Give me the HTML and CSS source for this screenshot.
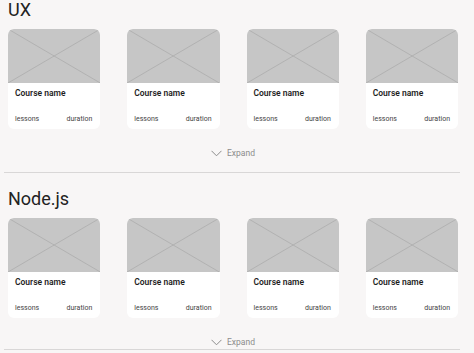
FILE: index.html
```html
<!DOCTYPE html>
<html lang="en">
<head>
    <meta charset="UTF-8">
    <meta name="viewport" content="width=device-width, initial-scale=1.0">
    <title>courses</title>
    <link rel="stylesheet" href="styles.css">
</head>
<body>
    <div class="section">
        <h2>UX</h2>
        <div class="cards">
            <div class="card">
                <div class="thumb"><svg viewBox="0 0 100 60" preserveAspectRatio="none"><path d="M0 0L100 60M100 0L0 60"/></svg></div>
                <div class="card-body">
                    <div class="card-title">Course name</div>
                    <div class="card-meta"><span>lessons</span><span>duration</span></div>
                </div>
            </div>
            <div class="card">
                <div class="thumb"><svg viewBox="0 0 100 60" preserveAspectRatio="none"><path d="M0 0L100 60M100 0L0 60"/></svg></div>
                <div class="card-body">
                    <div class="card-title">Course name</div>
                    <div class="card-meta"><span>lessons</span><span>duration</span></div>
                </div>
            </div>
            <div class="card">
                <div class="thumb"><svg viewBox="0 0 100 60" preserveAspectRatio="none"><path d="M0 0L100 60M100 0L0 60"/></svg></div>
                <div class="card-body">
                    <div class="card-title">Course name</div>
                    <div class="card-meta"><span>lessons</span><span>duration</span></div>
                </div>
            </div>
            <div class="card">
                <div class="thumb"><svg viewBox="0 0 100 60" preserveAspectRatio="none"><path d="M0 0L100 60M100 0L0 60"/></svg></div>
                <div class="card-body">
                    <div class="card-title">Course name</div>
                    <div class="card-meta"><span>lessons</span><span>duration</span></div>
                </div>
            </div>
        </div>
        <div class="expand">
            <svg width="11" height="7" viewBox="0 0 11 7"><path d="M0.5 0.8L5.5 5.8L10.5 0.8"/></svg>
            <span>Expand</span>
        </div>
    </div>

    <div class="section section-last">
        <h2>Node.js</h2>
        <div class="cards">
            <div class="card">
                <div class="thumb"><svg viewBox="0 0 100 60" preserveAspectRatio="none"><path d="M0 0L100 60M100 0L0 60"/></svg></div>
                <div class="card-body">
                    <div class="card-title">Course name</div>
                    <div class="card-meta"><span>lessons</span><span>duration</span></div>
                </div>
            </div>
            <div class="card">
                <div class="thumb"><svg viewBox="0 0 100 60" preserveAspectRatio="none"><path d="M0 0L100 60M100 0L0 60"/></svg></div>
                <div class="card-body">
                    <div class="card-title">Course name</div>
                    <div class="card-meta"><span>lessons</span><span>duration</span></div>
                </div>
            </div>
            <div class="card">
                <div class="thumb"><svg viewBox="0 0 100 60" preserveAspectRatio="none"><path d="M0 0L100 60M100 0L0 60"/></svg></div>
                <div class="card-body">
                    <div class="card-title">Course name</div>
                    <div class="card-meta"><span>lessons</span><span>duration</span></div>
                </div>
            </div>
            <div class="card">
                <div class="thumb"><svg viewBox="0 0 100 60" preserveAspectRatio="none"><path d="M0 0L100 60M100 0L0 60"/></svg></div>
                <div class="card-body">
                    <div class="card-title">Course name</div>
                    <div class="card-meta"><span>lessons</span><span>duration</span></div>
                </div>
            </div>
        </div>
        <div class="expand">
            <svg width="11" height="7" viewBox="0 0 11 7"><path d="M0.5 0.8L5.5 5.8L10.5 0.8"/></svg>
            <span>Expand</span>
        </div>
    </div>
</body>
</html>
```

FILE: styles.css
```css
body {
margin: 0;
background-color: #f8f6f6;
font-family: Roboto, "Liberation Sans", sans-serif;
color: #222;
overflow: hidden;
}


.section {
border-bottom: 1px solid #d9d7d7;
margin: 0 14px 0 4px;
padding: 0 2px 12px 4px;
}


.section-last {
padding-bottom: 0;
}


.section-last h2 {
margin-top: 16px;
}


h2 {
margin: 0 0 9px;
font-size: 18px;
line-height: 20px;
font-weight: 400;
color: #222;
}


.cards {
display: grid;
grid-template-columns: repeat(4, 1fr);
column-gap: 27px;
}


.card {
background: #fff;
border-radius: 6px;
overflow: hidden;
height: 100px;
display: flex;
flex-direction: column;
}


.thumb {
height: 54px;
background: #c6c6c6;
}


.thumb svg {
display: block;
width: 100%;
height: 100%;
}


.thumb path {
stroke: #acacac;
stroke-width: 0.8;
vector-effect: non-scaling-stroke;
fill: none;
}


.card-body {
flex: 1;
display: flex;
flex-direction: column;
justify-content: space-between;
padding: 5px 8px 6px 7px;
}


.card-title {
font-size: 8.5px;
line-height: 10px;
font-weight: 600;
color: #1e1e1e;
}


.card-meta {
display: flex;
justify-content: space-between;
font-size: 7px;
line-height: 8px;
color: #444;
}


.expand {
margin-top: 17px;
height: 14px;
display: flex;
align-items: center;
justify-content: center;
gap: 5px;
font-size: 8.5px;
color: #8c8c8c;
}


.expand svg path {
stroke: #8c8c8c;
stroke-width: 1;
fill: none;
}
```
